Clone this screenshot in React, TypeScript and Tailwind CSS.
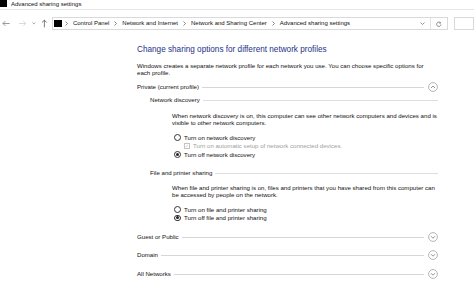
import React from 'react'

const crumbs = ['Control Panel', 'Network and Internet', 'Network and Sharing Center', 'Advanced sharing settings']

function Sep() {
  return (
    <svg width="3" height="5" viewBox="0 0 3 5" className="shrink-0">
      <path d="M0.5 0.5 L2.5 2.5 L0.5 4.5" fill="none" stroke="#555" strokeWidth="0.7" />
    </svg>
  )
}

function CircleToggle({ up }: { up?: boolean }) {
  return (
    <svg width="10" height="10" viewBox="0 0 10 10" className="shrink-0 ml-[4px]">
      <circle cx="5" cy="5" r="4.4" fill="white" stroke="#a3a3a3" strokeWidth="0.8" />
      {up ? (
        <path d="M3 6 L5 4 L7 6" fill="none" stroke="#7a7a7a" strokeWidth="0.8" />
      ) : (
        <path d="M3 4.2 L5 6.2 L7 4.2" fill="none" stroke="#7a7a7a" strokeWidth="0.8" />
      )}
    </svg>
  )
}

function Radio({ checked, label }: { checked?: boolean; label: string }) {
  return (
    <div className="h-[8.5px] flex items-center pl-[37px]">
      <span className="w-[6.5px] h-[6.5px] rounded-full border-[0.8px] border-[#333] flex items-center justify-center shrink-0">
        {checked && <span className="w-[3.2px] h-[3.2px] rounded-full bg-[#222]" />}
      </span>
      <span className="ml-[3.5px] whitespace-nowrap">{label}</span>
    </div>
  )
}

function Section({ label, up, className }: { label: string; up?: boolean; className?: string }) {
  return (
    <div className={'h-[10px] flex items-center ' + (className ?? '')}>
      <span className="whitespace-nowrap">{label}</span>
      <span className="flex-1 h-px bg-[#d6d6d6] ml-[3px]" />
      <CircleToggle up={up} />
    </div>
  )
}

function SubSection({ label, className }: { label: string; className?: string }) {
  return (
    <div className={'h-[10px] flex items-center pl-[13px] ' + (className ?? '')}>
      <span className="whitespace-nowrap">{label}</span>
      <span className="flex-1 h-px bg-[#dedede] ml-[3px]" />
    </div>
  )
}

export default function App() {
  return (
    <div className="w-[474px] h-[283px] overflow-hidden bg-white text-[#111] font-['Liberation_Sans',sans-serif]">
      {/* title bar */}
      <div className="h-[10px] flex items-start border-b border-[#e6e6e6]">
        <span className="w-[7px] h-[7px] bg-black" />
        <span className="ml-[4px] text-[6px] leading-[8px] whitespace-nowrap">Advanced sharing settings</span>
      </div>

      {/* nav */}
      <div className="h-[26px] flex items-center pt-[1px]">
        <svg width="9" height="7" viewBox="0 0 9 7" className="ml-[2px]">
          <path d="M8 3.5 H1 M3.5 1 L1 3.5 L3.5 6" fill="none" stroke="#7d7d7d" strokeWidth="0.8" />
        </svg>
        <svg width="9" height="7" viewBox="0 0 9 7" className="ml-[7px]">
          <path d="M1 3.5 H8 M5.5 1 L8 3.5 L5.5 6" fill="none" stroke="#cfcfcf" strokeWidth="0.8" />
        </svg>
        <svg width="4" height="3" viewBox="0 0 4 3" className="ml-[6px]">
          <path d="M0.5 0.5 L2 2 L3.5 0.5" fill="none" stroke="#7d7d7d" strokeWidth="0.7" />
        </svg>
        <svg width="7" height="9" viewBox="0 0 7 9" className="ml-[5px]">
          <path d="M3.5 8.5 V1 M1 3.5 L3.5 1 L6 3.5" fill="none" stroke="#555" strokeWidth="0.8" />
        </svg>
        <div className="ml-[4px] w-[411px] h-[13px] border border-[#d9d9d9] flex items-center text-[6px] whitespace-nowrap">
          <span className="ml-[1px] w-[8px] h-[7px] bg-black shrink-0" />
          <div className="ml-[3px] flex items-center gap-[5px]">
            {crumbs.map(c => (
              <React.Fragment key={c}>
                <Sep />
                <span>{c}</span>
              </React.Fragment>
            ))}
          </div>
          <div className="ml-auto flex items-center h-full">
            <svg width="5" height="3" viewBox="0 0 5 3">
              <path d="M0.5 0.5 L2.5 2.5 L4.5 0.5" fill="none" stroke="#666" strokeWidth="0.7" />
            </svg>
            <span className="ml-[5px] w-px h-full bg-[#e3e3e3]" />
            <svg width="6" height="6" viewBox="0 0 6 6" className="ml-[5px] mr-[5px]">
              <path d="M4.6 2 A2.2 2.2 0 1 0 5 3.4" fill="none" stroke="#666" strokeWidth="0.7" />
              <path d="M3.6 0.8 L4.8 2 L3.3 2.4" fill="none" stroke="#666" strokeWidth="0.6" />
            </svg>
          </div>
        </div>
        <div className="ml-[6px] w-[20px] h-[13px] border border-[#d9d9d9] shrink-0" />
      </div>

      {/* main */}
      <div className="pl-[137px] w-[438px] flex flex-col text-[6.1px]">
        <div className="mt-[8px] h-[12px] flex items-center text-[8.2px] text-[#1e3287] whitespace-nowrap">
          Change sharing options for different network profiles
        </div>
        <p className="mt-[6px] leading-[7px] whitespace-nowrap">
          Windows creates a separate network profile for each network you use. You can choose specific options for
          <br />
          each profile.
        </p>

        <Section label="Private (current profile)" up className="mt-[6px]" />
        <SubSection label="Network discovery" className="mt-[3px]" />
        <p className="mt-[7px] pl-[35px] leading-[7px] whitespace-nowrap">
          When network discovery is on, this computer can see other network computers and devices and is
          <br />
          visible to other network computers.
        </p>
        <div className="mt-[7px] flex flex-col">
          <Radio label="Turn on network discovery" />
          <div className="h-[8.5px] flex items-center pl-[47px] text-[#a0a0a0]">
            <span className="w-[5.5px] h-[5.5px] border-[0.8px] border-[#c4c4c4] flex items-center justify-center shrink-0">
              <svg width="4" height="4" viewBox="0 0 4 4">
                <path d="M0.6 2 L1.6 3 L3.4 0.8" fill="none" stroke="#b5b5b5" strokeWidth="0.6" />
              </svg>
            </span>
            <span className="ml-[3.5px] whitespace-nowrap">Turn on automatic setup of network connected devices.</span>
          </div>
          <Radio checked label="Turn off network discovery" />
        </div>

        <SubSection label="File and printer sharing" className="mt-[9.5px]" />
        <p className="mt-[5.5px] pl-[35px] leading-[7px] whitespace-nowrap">
          When file and printer sharing is on, files and printers that you have shared from this computer can
          <br />
          be accessed by people on the network.
        </p>
        <div className="mt-[7.5px] flex flex-col">
          <Radio label="Turn on file and printer sharing" />
          <Radio checked label="Turn off file and printer sharing" />
        </div>

        <Section label="Guest or Public" className="mt-[10px]" />
        <Section label="Domain" className="mt-[8px]" />
        <Section label="All Networks" className="mt-[9px]" />
      </div>
    </div>
  )
}
